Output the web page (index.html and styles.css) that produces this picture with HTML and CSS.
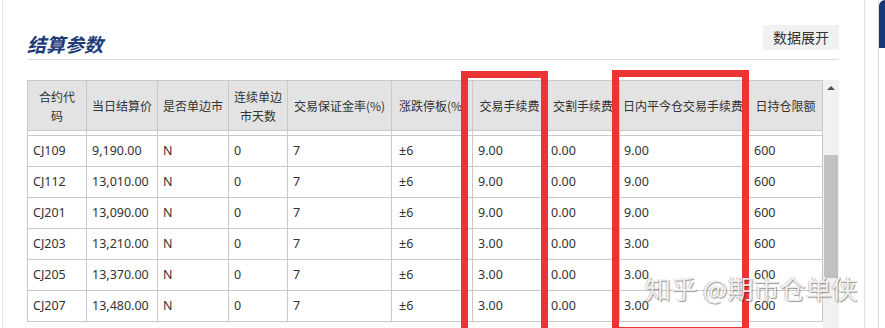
FILE: index.html
```html
<!DOCTYPE html>
<html lang="zh-CN">
<head>
<meta charset="utf-8">
<title>结算参数</title>
<link rel="stylesheet" href="styles.css">
</head>
<body>
<div class="page">
  <div class="main">
    <div class="head">
      <h2 class="title">结算参数</h2>
      <button class="expand" type="button">数据展开</button>
    </div>
    <div class="grid-wrap">
      <table class="grid">
        <colgroup>
          <col class="w59"><col class="w71"><col class="w71"><col class="w59"><col class="w104">
          <col class="w81"><col class="w74"><col class="w73"><col class="w129"><col class="w74">
        </colgroup>
        <thead>
          <tr>
            <th>合约代<br>码</th>
            <th>当日结算价</th>
            <th>是否单边市</th>
            <th>连续单边<br>市天数</th>
            <th>交易保证金率(%)</th>
            <th class="clip">涨跌停板(%)</th>
            <th>交易手续费</th>
            <th>交割手续费</th>
            <th class="left">日内平今仓交易手续费</th>
            <th>日持仓限额</th>
          </tr>
        </thead>
        <tbody>
          <tr class="peek"><td></td><td></td><td></td><td></td><td></td><td></td><td></td><td></td><td></td><td></td></tr>
          <tr><td>CJ109</td><td>9,190.00</td><td>N</td><td>0</td><td>7</td><td class="pm">±6</td><td>9.00</td><td class="tight">0.00</td><td class="tight">9.00</td><td>600</td></tr>
          <tr><td>CJ112</td><td>13,010.00</td><td>N</td><td>0</td><td>7</td><td class="pm">±6</td><td>9.00</td><td class="tight">0.00</td><td class="tight">9.00</td><td>600</td></tr>
          <tr><td>CJ201</td><td>13,090.00</td><td>N</td><td>0</td><td>7</td><td class="pm">±6</td><td>9.00</td><td class="tight">0.00</td><td class="tight">9.00</td><td>600</td></tr>
          <tr><td>CJ203</td><td>13,210.00</td><td>N</td><td>0</td><td>7</td><td class="pm">±6</td><td>3.00</td><td class="tight">0.00</td><td class="tight">3.00</td><td>600</td></tr>
          <tr><td>CJ205</td><td>13,370.00</td><td>N</td><td>0</td><td>7</td><td class="pm">±6</td><td>3.00</td><td class="tight">0.00</td><td class="tight">3.00</td><td>600</td></tr>
          <tr><td>CJ207</td><td>13,480.00</td><td>N</td><td>0</td><td>7</td><td class="pm">±6</td><td>3.00</td><td class="tight">0.00</td><td class="tight">3.00</td><td>600</td></tr>
        </tbody>
      </table>
      <div class="scrollbar">
        <span class="arrow"></span>
        <span class="thumb"></span>
      </div>
    </div>
  </div>
  <div class="side">
    <div class="side-head"></div>
  </div>
</div>
<div class="mark mark-a"></div>
<div class="mark mark-b"></div>
<div class="watermark">知乎 @期市仓单侠</div>
</body>
</html>
```
FILE: styles.css
```css
* { box-sizing: border-box; }
html, body {
  margin: 0;
  padding: 0;
  background: #fff;
  height: 328px;
  overflow: hidden;
}
body {
  position: relative;
  font-family: "Noto Sans CJK SC", "Noto Sans", sans-serif;
  color: #333;
}
.page {
  display: flex;
  height: 328px;
  overflow: hidden;
}
.main {
  margin-left: 2px;
  width: 863px;
  border-left: 1px solid #e2e2e2;
  border-right: 1px solid #e2e2e2;
  padding: 0 25px 0 24px;
  overflow: hidden;
}
.head {
  display: flex;
  justify-content: space-between;
  align-items: flex-start;
  height: 60px;
  padding-top: 25px;
  border-bottom: 1px solid #dcdcdc;
}
.title {
  margin: 7px 0 0;
  font-size: 19px;
  line-height: 24px;
  font-weight: bold;
  font-style: italic;
  color: #1d3b78;
}
.expand {
  width: 76px;
  height: 25px;
  border: 0;
  padding: 0;
  background: #f1f1f1;
  color: #333;
  font-family: inherit;
  font-size: 14px;
  line-height: 25px;
}
.grid-wrap {
  display: flex;
  margin-top: 20px;
  align-items: flex-start;
}
.grid {
  width: 795px;
  table-layout: fixed;
  border-collapse: collapse;
  font-size: 13px;
}
.w59 { width: 59px; }
.w71 { width: 71px; }
.w74 { width: 74px; }
.w73 { width: 73px; }
.w81 { width: 81px; }
.w104 { width: 104px; }
.w129 { width: 129px; }
.grid th {
  height: 50px;
  padding: 0 5px;
  background: #e3e3e3;
  border: 1px solid #c9c9c9;
  font-size: 12px;
  font-weight: normal;
  line-height: 19px;
  color: #333;
  white-space: nowrap;
  text-align: center;
  overflow: hidden;
}
.grid th.clip { text-align: left; padding-left: 7px; }
.grid th.left { text-align: left; padding-left: 3px; }
.grid td {
  height: 31px;
  padding: 0 5px;
  border: 1px solid #c9c9c9;
  font-family: "Noto Sans", "Noto Sans CJK SC", sans-serif;
  font-size: 12.5px;
  line-height: 18px;
  white-space: nowrap;
  overflow: hidden;
  color: #333;
}
.grid td.pm { padding-left: 7px; }
.grid td.tight { padding-left: 4px; }
.grid tr.peek td {
  height: 5px;
  line-height: 0;
  font-size: 0;
}
.scrollbar {
  width: 17px;
  height: 260px;
  background: #f1f1f1;
  display: flex;
  flex-direction: column;
  align-items: center;
}
.arrow {
  margin-top: 6px;
  width: 0;
  height: 0;
  border-left: 4px solid transparent;
  border-right: 4px solid transparent;
  border-bottom: 4px solid #555;
}
.thumb {
  margin-top: 65px;
  width: 14px;
  height: 123px;
  background: #c1c1c1;
}
.side {
  margin-left: 13px;
  flex: 1;
  border-left: 1px solid #dcdcdc;
}
.side-head {
  height: 48px;
  background: #173a7c;
  border-top-left-radius: 7px;
}
.mark {
  position: absolute;
  top: 71px;
  height: 264px;
  border: 7px solid #ec3435;
}
.mark-a { left: 461px; width: 87px; }
.mark-b { left: 612px; top: 70px; width: 137px; }
.watermark {
  position: absolute;
  left: 645px;
  top: 270px;
  font-size: 26px;
  line-height: 36px;
  color: rgba(255, 255, 255, 0.85);
  white-space: nowrap;
  text-shadow: 1px 1px 1px rgba(0, 0, 0, 0.4), -1px 0 0 rgba(150, 150, 150, 0.5);
}
```
